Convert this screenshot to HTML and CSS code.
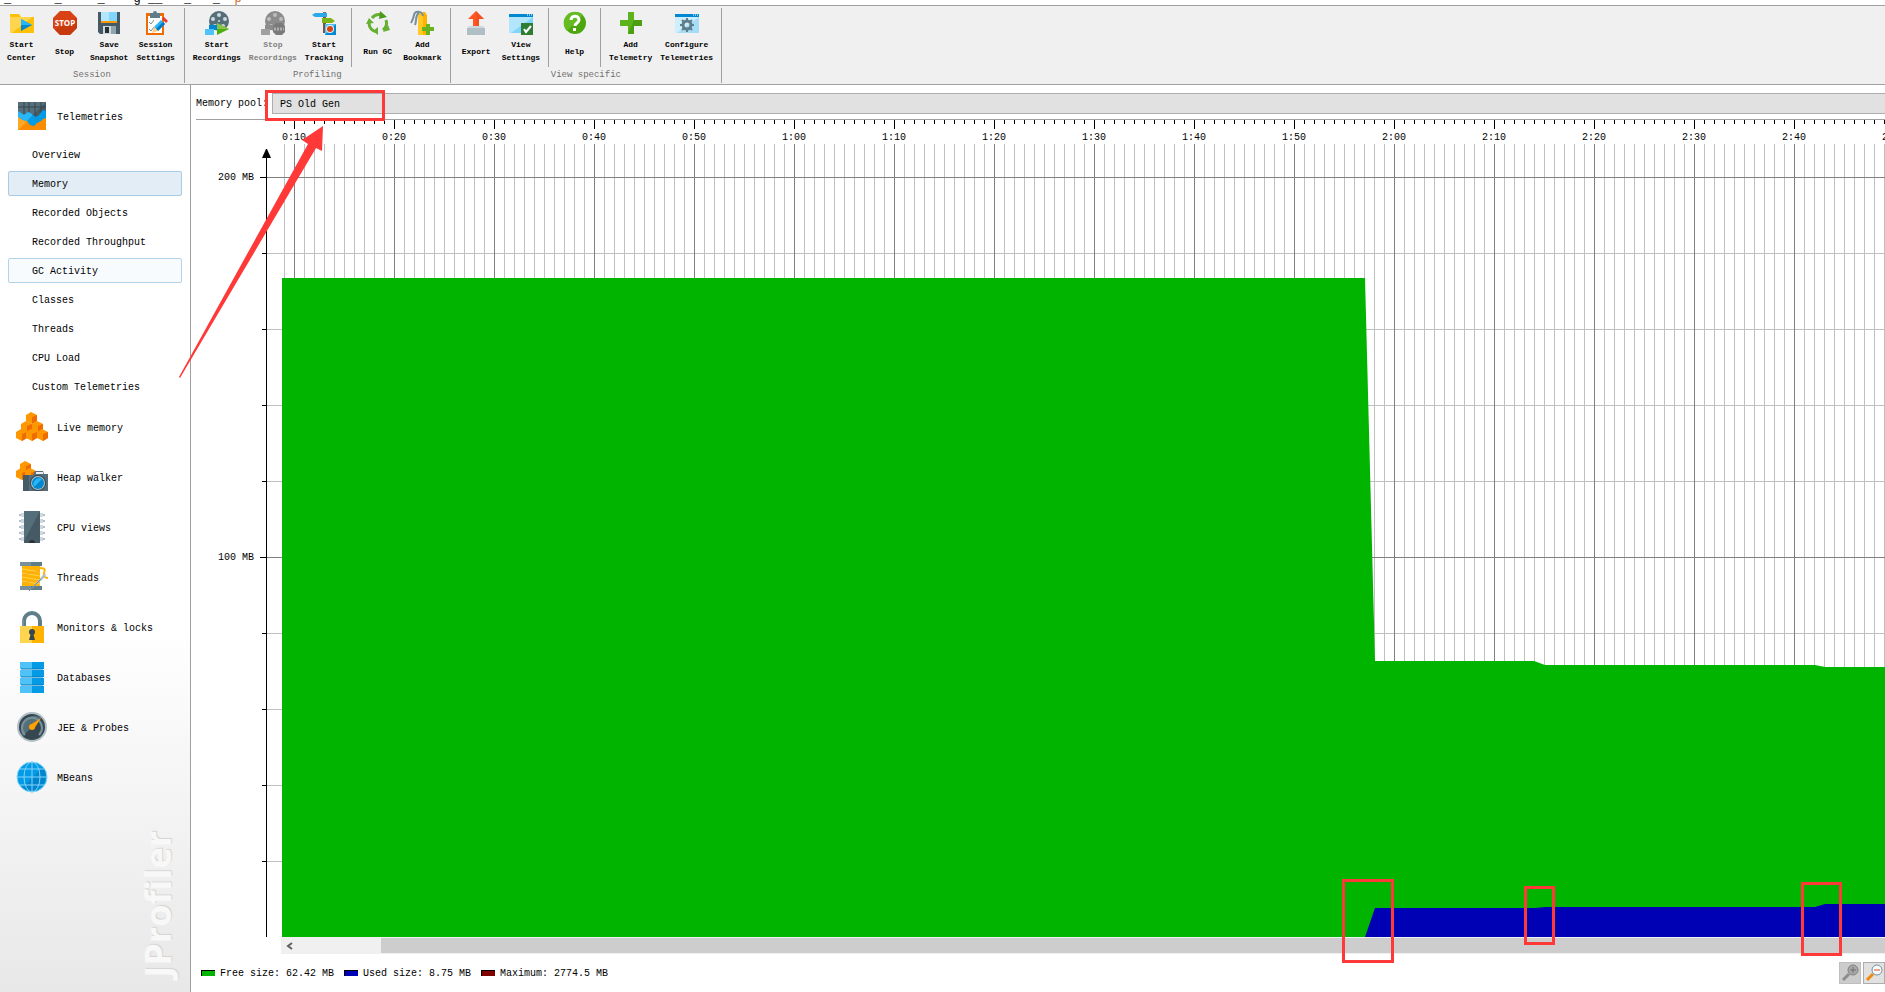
FILE: index.html
```html
<!DOCTYPE html>
<html lang="en">
<head>
    <meta charset="UTF-8">
    <meta name="viewport" content="width=device-width, initial-scale=1.0">
    <title>JProfiler</title>
    <link rel="stylesheet" href="styles.css">
</head>
<body>
    <div class="app">
        <div class="strip"><pre>_      _     _    g __   _   _  <span>p</span></pre></div>

        <header class="toolbar">
            <section class="group">
                <div class="tools">
                    <div class="set">
                        <button type="button" class="tool">
                            <svg viewBox="0 0 24 24"><path fill="#ffc107" d="M0 3h9l2 3h13v16H0z"/><path fill="#ffd54f" d="M0 6h22L2 22H0z"/><path fill="#0288d1" d="M11 8l11 6-11 6z"/><path fill="#29b6f6" d="M11 8l11 6H11z"/></svg>
                            <span>Start<br>Center</span>
                        </button>
                        <button type="button" class="tool">
                            <svg viewBox="0 0 24 24"><path fill="#d84315" d="M7 0h10l7 7v10l-7 7H7l-7-7V7z"/><path fill="#bf360c" d="M24 7v10l-7 7H7l-5-5z" opacity=".7"/><text class="stop" x="12" y="15">STOP</text></svg>
                            <span>Stop</span>
                        </button>
                        <button type="button" class="tool">
                            <svg viewBox="0 0 24 24"><path fill="#455a64" d="M1 1h22v22H3l-2-2z"/><path fill="#b3e5fc" d="M4 1h16v9H4z"/><path fill="#81d4fa" d="M12 1h8v9h-8z"/><path fill="#ff9800" d="M4 10h16v2H4z"/><path fill="#cfd8dc" d="M6 15h13v8H6z"/><path fill="#263238" d="M8 16h4v6H8z"/><path fill="#90a4ae" d="M14 15h5v8h-5z"/></svg>
                            <span>Save<br>Snapshot</span>
                        </button>
                        <button type="button" class="tool">
                            <svg viewBox="0 0 24 24"><path fill="#ef6c00" d="M2 2h18v22H2z"/><path fill="#fff" d="M4 5h14v17H4z"/><path fill="#607d8b" d="M6 2h3a2 2 0 014 0h3v5H6z"/><path fill="none" stroke="#78909c" d="M5 11l2 2 3-4M5 18l2 2 3-4"/><path fill="#e53935" d="M18 8l2-2 4 4-2 2z"/><path fill="#29b6f6" d="M17 9l4 4-7 7-4-4z"/><path fill="#0277bd" d="M19 11l2 2-7 7-2-2z"/><path fill="#ffcc80" d="M10 16l4 4-6 2z"/></svg>
                            <span>Session<br>Settings</span>
                        </button>
                    </div>
                </div>
                <h2>Session</h2>
            </section>

            <section class="group">
                <div class="tools">
                    <div class="set">
                        <button type="button" class="tool">
                            <svg viewBox="0 0 24 24"><circle cx="14" cy="10" r="10" fill="#546e7a"/><g fill="#cfd8dc"><circle cx="14" cy="4" r="2"/><circle cx="8" cy="8" r="2"/><circle cx="20" cy="8" r="2"/><circle cx="10" cy="15" r="2"/><circle cx="18" cy="15" r="2"/><circle cx="14" cy="10" r="1"/></g><path fill="#0288d1" d="M4 14h8v5H9v5H0v-6h4z"/><path fill="#4fc3f7" d="M0 18h9v6H0z"/><path fill="#4caf10" d="M12 12l12 6-12 6z"/><path fill="#8bc34a" d="M12 12l12 6H12z"/></svg>
                            <span>Start<br>Recordings</span>
                        </button>
                        <button type="button" class="tool" disabled>
                            <svg viewBox="0 0 24 24"><circle cx="14" cy="10" r="10" fill="#8c8c8c"/><g fill="#bdbdbd"><circle cx="14" cy="4" r="2"/><circle cx="8" cy="8" r="2"/><circle cx="20" cy="8" r="2"/><circle cx="10" cy="15" r="2"/></g><path fill="#8c8c8c" d="M4 14h8v5H9v5H0v-6h4z"/><path fill="#a0a0a0" d="M0 18h9v6H0z"/><path fill="#7a7a7a" d="M15 12h6l3 3v6l-3 3h-6l-3-3v-6z"/><path stroke="#b0b0b0" stroke-width="3" stroke-dasharray="2 1" d="M13 18h10"/></svg>
                            <span>Stop<br>Recordings</span>
                        </button>
                        <button type="button" class="tool">
                            <svg viewBox="0 0 24 24"><path fill="#795548" d="M11 2h3v20h-3z"/><path fill="#8d6e63" d="M11 1h3v2h-3z"/><path fill="#29a9e8" d="M3 2h12v4H3L0 4z"/><path fill="#7cb518" d="M10 7h9l4 3-3 2H10z"/><path fill="#0288d1" d="M13 13h11v11H13z"/><path fill="#4fc3f7" d="M13 13h11L13 24z"/><circle cx="18" cy="18" r="4" fill="#eceff1"/><circle cx="18" cy="18" r="3" fill="#d84315"/></svg>
                            <span>Start<br>Tracking</span>
                        </button>
                    </div>
                    <div class="set">
                        <button type="button" class="tool">
                            <svg viewBox="0 0 24 24"><g fill="none" stroke="#66b032" stroke-width="3"><path d="M6 7a9 9 0 0110-3"/><path d="M20 9a9 9 0 01-3 10"/><path d="M11 21a9 9 0 01-8-9"/></g><path fill="#4c9a1c" d="M14 0l7 6-8 2z"/><path fill="#66b032" d="M12 16v8l-5-4zM22 14l2 5-7 2zM0 13l3-6 5 5z"/></svg>
                            <span>Run GC</span>
                        </button>
                        <button type="button" class="tool">
                            <svg viewBox="0 0 24 24"><path fill="#ffb300" d="M8 4l3-3h4l2 3v20H8z"/><path fill="#ffca28" d="M8 4l3-3h2v23H8z"/><path fill="none" stroke="#78909c" stroke-width="2" d="M13 5C12 0 5-1 4 4S2 10 1 12M9 2C5 4 7 9 5 14"/><path fill="#66b220" d="M16 13h4v3h4v4h-4v4h-4v-4h-4v-4h4z"/></svg>
                            <span>Add<br>Bookmark</span>
                        </button>
                    </div>
                </div>
                <h2>Profiling</h2>
            </section>

            <section class="group">
                <div class="tools">
                    <div class="set">
                        <button type="button" class="tool">
                            <svg viewBox="0 0 24 24"><path fill="#ff5722" d="M12 0l8 8h-5v7H9V8H4z"/><path fill="#e64a19" d="M12 0l8 8h-5v7h-3z" opacity=".5"/><path fill="#cfd8dc" d="M5 15h14l2 2H3z"/><path fill="#b0bec5" d="M3 17h18v7H3z"/></svg>
                            <span>Export</span>
                        </button>
                        <button type="button" class="tool">
                            <svg viewBox="0 0 24 24"><path fill="#0288d1" d="M0 3h24v3H0z"/><path fill="#b3e5fc" d="M0 6h24v16H0z"/><path fill="#81d4fa" d="M24 6v16H2z"/><path stroke="#fff" d="M18 4h1M20 4h1M22 4h1"/><path fill="#2e7d32" d="M12 12h12v12H12z"/><path fill="none" stroke="#fff" stroke-width="2" d="M15 18l2 3 5-6"/></svg>
                            <span>View<br>Settings</span>
                        </button>
                    </div>
                    <div class="set">
                        <button type="button" class="tool">
                            <svg viewBox="0 0 24 24"><circle cx="12" cy="12" r="11" fill="#4da60d"/><path fill="#64bb22" d="M4 20A11 11 0 0120 4z"/><path fill="none" stroke="#fff" stroke-width="3" d="M8 9c0-5 8-5 8 0 0 3-4 3-4 6"/><path fill="#fff" d="M10 17h3v3h-3z"/></svg>
                            <span>Help</span>
                        </button>
                    </div>
                    <div class="set">
                        <button type="button" class="tool">
                            <svg viewBox="0 0 24 24"><path fill="#5cb31c" d="M9 1h6v8h8v6h-8v8H9v-8H1V9h8z"/><path fill="#4c9f10" d="M15 9h8v6h-8v8H9z"/></svg>
                            <span>Add<br>Telemetry</span>
                        </button>
                        <button type="button" class="tool">
                            <svg viewBox="0 0 24 24"><path fill="#0288d1" d="M0 3h24v3H0z"/><path fill="#cdeefd" d="M0 6h24v16H0z"/><path fill="#a5ddf8" d="M24 6v16H2z"/><path stroke="#fff" d="M18 4h1M20 4h1M22 4h1"/><circle cx="12" cy="14" r="4" fill="none" stroke="#607d8b" stroke-width="3"/><path stroke="#607d8b" stroke-width="2" d="M12 7v3M12 18v3M5 14h3M16 14h3M7 9l2 2M15 17l2 2M17 9l-2 2M9 17l-2 2"/></svg>
                            <span>Configure<br>Telemetries</span>
                        </button>
                    </div>
                </div>
                <h2>View specific</h2>
            </section>
        </header>

        <div class="content">
            <nav class="sidebar">
                <a href="#" class="item">
                    <svg viewBox="0 0 32 32"><path fill="#455a64" d="M2 2h28v28H2z"/><path fill="#607d8b" d="M2 2h28L12 20H2z" opacity=".6"/><path stroke="#37474f" d="M2 7h28M8 2v12M13 2v10M19 2v14M25 2v12"/><path fill="#039be5" d="M2 11l3 2 3 2 4-3 4 2 4 3 3-2 3-4 2-1 2 1v19H2z"/><path fill="#29b6f6" d="M2 11l6 4 4-3 4 2v2L8 24H2z"/><path fill="#fb8c00" d="M2 17l4 3 5 1 3 4 4 1 3-3 4-2 2-2 3-1v12H2z"/><path fill="#ffa726" d="M2 17l4 3 5 2-9 8z"/></svg>
                    <span>Telemetries</span>
                </a>
                <ul class="sub">
                    <li><a href="#">Overview</a></li>
                    <li><a href="#" class="selected">Memory</a></li>
                    <li><a href="#">Recorded Objects</a></li>
                    <li><a href="#">Recorded Throughput</a></li>
                    <li><a href="#" class="hovered">GC Activity</a></li>
                    <li><a href="#">Classes</a></li>
                    <li><a href="#">Threads</a></li>
                    <li><a href="#">CPU Load</a></li>
                    <li><a href="#">Custom Telemetries</a></li>
                </ul>
                <a href="#" class="item">
                    <svg viewBox="0 0 32 32"><defs><g id="cube"><path fill="#ff9800" d="M0 3l5-3 6 3v6l-5 3-6-3z"/><path fill="#ef6c00" d="M6 5l5-2v6l-5 3z"/></g></defs><use href="#cube" x="10" y="1"/><use href="#cube" x="5" y="10"/><use href="#cube" x="16" y="10"/><use href="#cube" x="0" y="18"/><use href="#cube" x="10" y="18"/><use href="#cube" x="21" y="18"/></svg>
                    <span>Live memory</span>
                </a>
                <a href="#" class="item">
                    <svg viewBox="0 0 32 32"><use href="#cube" x="4" y="0"/><use href="#cube" x="0" y="7"/><use href="#cube" x="9" y="7"/><path fill="#546e7a" d="M7 14h10l2-4h8l1 3h4v17H7z"/><path fill="#37474f" d="M7 14h6v16H7z" opacity=".5"/><path fill="#eceff1" d="M20 11h7v2h-7z"/><circle cx="22" cy="22" r="8" fill="#37474f"/><circle cx="22" cy="22" r="7" fill="#b0bec5"/><circle cx="22" cy="22" r="6" fill="#0288d1"/><path fill="#29b6f6" d="M18 26a6 6 0 018-8z"/></svg>
                    <span>Heap walker</span>
                </a>
                <a href="#" class="item">
                    <svg viewBox="0 0 32 32"><path stroke="#b0bec5" stroke-width="2" d="M3 4h26M3 10h26M3 16h26M3 22h26M3 28h26"/><path stroke="#cfd8dc" stroke-width="4" d="M5 4h22M5 10h22M5 16h22M5 22h22M5 28h22"/><path fill="#455a64" d="M8 0h16v32H8z"/><path fill="#546e7a" d="M8 0h16L8 30z"/><path fill="#263238" d="M13 32a3 3 0 016 0z"/></svg>
                    <span>CPU views</span>
                </a>
                <a href="#" class="item">
                    <svg viewBox="0 0 32 32"><path fill="#ffb300" d="M6 5h18v21H6z"/><path stroke="#ffd54f" d="M6 8l18 3M6 12l18 3M6 16l18 3M6 20l18 3"/><path stroke="#f9a825" d="M6 22l18-3M6 14l18-4"/><path fill="#607d8b" d="M4 1h22v4H4zM4 25h22v4H4z"/><path fill="#78909c" d="M4 1h11v4H4zM4 25h11v4H4z"/><path fill="none" stroke="#ffb300" stroke-width="2" d="M24 7c6 0 5 2 4 5s1 5 4 5"/><path fill="#b0bec5" d="M12 31l15-17 3-1-1 3z"/><path stroke="#78909c" d="M13 30l12-12"/></svg>
                    <span>Threads</span>
                </a>
                <a href="#" class="item">
                    <svg viewBox="0 0 32 32"><path fill="none" stroke="#607d8b" stroke-width="4" d="M8 16v-6a8 8 0 0116 0v6"/><path stroke="#90a4ae" d="M7 15V9"/><path fill="#ffb300" d="M4 15h24v17H4z"/><path fill="#ffd54f" d="M4 15h12v17H4z"/><circle cx="16" cy="21" r="3" fill="#37474f"/><path fill="#37474f" d="M15 22h2l2 7h-6z"/></svg>
                    <span>Monitors &amp; locks</span>
                </a>
                <a href="#" class="item">
                    <svg viewBox="0 0 32 32"><path fill="#039be5" d="M4 1h24v7H4zM4 9h24v7H4zM4 17h24v7H4zM4 25h24v7H4z"/><path fill="#4fc3f7" d="M4 1h12v7H4zM4 9h12v7H4zM4 17h12v7H4zM4 25h12v7H4z"/><path stroke="#0277bd" d="M5 8h22M5 16h22M5 24h22"/></svg>
                    <span>Databases</span>
                </a>
                <a href="#" class="item">
                    <svg viewBox="0 0 32 32"><circle cx="16" cy="16" r="15" fill="#b0bec5"/><circle cx="16" cy="16" r="13" fill="#37474f"/><path fill="#546e7a" d="M7 25A13 13 0 0125 7z"/><path fill="none" stroke="#78909c" stroke-width="2" d="M9 24a10 10 0 1114 0"/><circle cx="16" cy="16" r="3" fill="#ffa000"/><path fill="#ffa000" d="M14 14L25 7l-7 11z"/></svg>
                    <span>JEE &amp; Probes</span>
                </a>
                <a href="#" class="item">
                    <svg viewBox="0 0 32 32"><circle cx="16" cy="16" r="15" fill="#039be5"/><path fill="#0277bd" d="M27 6A15 15 0 016 27z" opacity=".6"/><g fill="none" stroke="#81d4fa"><circle cx="16" cy="16" r="15"/><ellipse cx="16" cy="16" rx="8" ry="15"/><path d="M16 1v30M1 16h30M4 8h24M4 24h24"/></g></svg>
                    <span>MBeans</span>
                </a>
                <div class="brand">JProfiler</div>
            </nav>

            <main class="main">
                <div class="pool">
                    <label for="pool">Memory pool:</label>
                    <select id="pool">
                        <option>PS Old Gen</option>
                    </select>
                </div>

                <svg class="chart">
                    <defs>
                        <pattern id="seconds" x="93" y="0" width="10" height="10" patternUnits="userSpaceOnUse"><rect width="1" height="10" fill="#c0c0c0"/></pattern>
                        <pattern id="tens" x="103" y="0" width="100" height="10" patternUnits="userSpaceOnUse"><rect width="1" height="10" fill="#808080"/></pattern>
                    </defs>
                    <path stroke="#000" stroke-width="4" stroke-dasharray="1 9" d="M93 2H4000"/>
                    <path stroke="#000" stroke-width="8" stroke-dasharray="1 99" d="M103 5H4000"/>

                    <!-- grid -->
                    <rect x="93" y="24" width="100%" height="793" fill="url(#seconds)"/>
                    <g fill="#c0c0c0">
                        <rect x="75" y="133" width="100%" height="1"/>
                        <rect x="75" y="209" width="100%" height="1"/>
                        <rect x="75" y="285" width="100%" height="1"/>
                        <rect x="75" y="361" width="100%" height="1"/>
                        <rect x="75" y="513" width="100%" height="1"/>
                        <rect x="75" y="589" width="100%" height="1"/>
                        <rect x="75" y="665" width="100%" height="1"/>
                        <rect x="75" y="741" width="100%" height="1"/>
                    </g>
                    <rect x="93" y="24" width="100%" height="793" fill="url(#tens)"/>
                    <rect x="75" y="57" width="100%" height="1" fill="#808080"/>
                    <rect x="75" y="437" width="100%" height="1" fill="#808080"/>

                    <!-- time labels -->
                    <g text-anchor="middle">
                        <text x="103" y="20">0:10</text>
                        <text x="203" y="20">0:20</text>
                        <text x="303" y="20">0:30</text>
                        <text x="403" y="20">0:40</text>
                        <text x="503" y="20">0:50</text>
                        <text x="603" y="20">1:00</text>
                        <text x="703" y="20">1:10</text>
                        <text x="803" y="20">1:20</text>
                        <text x="903" y="20">1:30</text>
                        <text x="1003" y="20">1:40</text>
                        <text x="1103" y="20">1:50</text>
                        <text x="1203" y="20">2:00</text>
                        <text x="1303" y="20">2:10</text>
                        <text x="1403" y="20">2:20</text>
                        <text x="1503" y="20">2:30</text>
                        <text x="1603" y="20">2:40</text>
                        <text x="1703" y="20">2:50</text>
                    </g>

                    <!-- free and used size -->
                    <path fill="#00b400" d="M91 158H1174L1184 541H1343L1354 545H1624L1634 547H4000V817H91z"/>
                    <path fill="#0000b4" d="M1174 817L1184 788H1344L1354 787H1624L1634 784H4000V817z"/>

                    <!-- value axis -->
                    <rect x="75" y="34" width="1" height="783"/>
                    <path d="M71 38L75 29h1l4 9z"/>
                    <path d="M69 57h6v1h-6zM69 437h6v1h-6zM71 133h4v1h-4zM71 209h4v1h-4zM71 285h4v1h-4zM71 361h4v1h-4zM71 513h4v1h-4zM71 589h4v1h-4zM71 665h4v1h-4zM71 741h4v1h-4z"/>
                    <g text-anchor="end">
                        <text x="63" y="60">200 MB</text>
                        <text x="63" y="440">100 MB</text>
                    </g>
                </svg>

                <div class="scroll">
                    <button type="button" class="scroll-left" aria-label="Scroll left"><svg viewBox="0 0 8 8"><path fill="none" stroke="#606060" stroke-width="2" d="M6 1L2 4l4 3"/></svg></button>
                    <div class="thumb"></div>
                </div>

                <footer class="footer">
                    <ul class="legend">
                        <li><i class="free"></i>Free size: 62.42 MB</li>
                        <li><i class="used"></i>Used size: 8.75 MB</li>
                        <li><i class="max"></i>Maximum: 2774.5 MB</li>
                    </ul>
                    <div class="zoom">
                        <button type="button" aria-label="Zoom in" disabled><svg viewBox="0 0 18 18"><path stroke="#8c8c8c" stroke-width="3" d="M2 16l6-6"/><circle cx="12" cy="6" r="5" fill="#a8a8a8" stroke="#808080"/><path stroke="#707070" d="M9 6h6M12 3v6"/></svg></button>
                        <button type="button" aria-label="Zoom out"><svg viewBox="0 0 18 18"><path stroke="#ef8a10" stroke-width="3" d="M2 16l6-6"/><circle cx="12" cy="6" r="5" fill="#f5fbff" stroke="#78909c"/><path stroke="#e64a19" d="M9 6h6"/></svg></button>
                    </div>
                </footer>
            </main>
        </div>

        <!-- markers drawn over the page -->
        <svg class="marks">
            <path fill="#ff3838" fill-rule="evenodd" d="M265 90h120v31H265zM268 93v25h114V93zM1342 879h52v84h-52zM1345 882v78h46v-78zM1524 886h31v59h-31zM1527 889v53h25v-53zM1801 882h41v74h-41zM1804 885v68h35v-68z"/>
            <path fill="#ff3838" d="M323 126L302 140l6 4L179 377l1 1L316 148l6 3z"/>
        </svg>
    </div>
</body>
</html>
```

FILE: styles.css
```css
body {
    margin: 0;
    font-family: "Liberation Mono", monospace;
    font-size: 10px;
    line-height: 13px;
    color: #000;
    background-color: #fff;
}
button {
    font-family: inherit;
    border: none;
    background: none;
    padding: 0;
}
a {
    color: inherit;
    text-decoration: none;
}
ul {
    list-style: none;
    margin: 0;
    padding: 0;
}
.app {
    position: relative;
    display: flex;
    flex-direction: column;
    min-height: 100vh;
    overflow: hidden;
}

/* bottom edge of the line above the toolbar */
.strip {
    display: flex;
    align-items: flex-end;
    height: 5px;
    padding: 0 4px;
    overflow: hidden;
}
.strip pre {
    margin: 0;
    font-family: inherit;
    font-size: 12px;
    line-height: 12px;
}
.strip span {
    color: #d2691e;
}

/* toolbar */
.toolbar {
    display: flex;
    height: 78px;
    border-top: 1px solid #a0a0a0;
    border-bottom: 1px solid #a0a0a0;
    background-color: #f0f0f0;
}
.group {
    display: flex;
    flex-direction: column;
    margin: 2px 0 1px;
    border-right: 1px solid #a0a0a0;
}
.tools {
    display: flex;
    height: 59px;
}
.set {
    display: flex;
    padding: 0 4px;
    border-right: 1px solid #a0a0a0;
}
.set:last-child {
    border-right: none;
}
.group:first-child .set {
    padding: 0 5px 0 0;
}
.tool {
    display: flex;
    flex-direction: column;
    align-items: center;
    min-width: 43px;
    padding: 3px 4px 0;
    font-size: 8px;
    line-height: 13px;
    font-weight: bold;
    color: #000;
}
.tool svg {
    width: 24px;
    height: 24px;
    overflow: visible;
}
.tool span {
    display: flex;
    flex-direction: column;
    justify-content: center;
    height: 34px;
    text-align: center;
}
.tool:disabled {
    color: #808080;
}
.stop {
    font: bold 8px "Open Sans", sans-serif;
    fill: #fff;
    text-anchor: middle;
}
.group h2 {
    margin: 2px 0 0;
    font-size: 9px;
    line-height: 13px;
    font-weight: normal;
    text-align: center;
    color: #707070;
}

/* sidebar */
.content {
    display: flex;
    flex: 1;
}
.sidebar {
    display: flex;
    flex-direction: column;
    width: 190px;
    padding-top: 6px;
    box-sizing: border-box;
    background: linear-gradient(#fff 60%, #e8e8e8);
}
.item {
    display: flex;
    align-items: center;
    gap: 9px;
    height: 50px;
    padding-left: 16px;
}
.item svg {
    width: 32px;
    height: 32px;
}
.item span {
    padding-top: 2px;
}
.sub li {
    padding: 1px 8px 3px;
}
.sub a {
    display: block;
    padding: 2px 23px 0;
    border: 1px solid transparent;
    border-radius: 2px;
    line-height: 21px;
}
.sub .selected {
    background-color: #e3edf6;
    border-color: #a9cbe3;
}
.sub .hovered {
    background-color: #f7fbfe;
    border-color: #b2d2e8;
}
.brand {
    align-self: flex-end;
    margin: auto 10px 14px 0;
    font: bold 36px/44px "Open Sans", sans-serif;
    color: #f8f8f8;
    text-shadow: 1px 1px 1px #d4d4d4;
    writing-mode: vertical-rl;
    transform: rotate(180deg);
}

/* telemetry view */
.main {
    display: flex;
    flex-direction: column;
    flex: 1;
    min-width: 0;
    border-left: 1px solid #a0a0a0;
}
.pool {
    display: flex;
    align-items: center;
    gap: 4px;
    height: 31px;
    margin-left: 5px;
    padding-top: 3px;
    border-bottom: 1px solid #a0a0a0;
}
.pool select {
    flex: 1;
    height: 21px;
    margin-right: -1px;
    padding: 1px 7px 0;
    appearance: none;
    border: 1px solid #adadad;
    border-radius: 0;
    background-color: #e1e1e1;
    font-family: inherit;
    font-size: 10px;
    color: #000;
}
.chart {
    display: block;
    width: 100%;
    height: 817px;
}
.scroll {
    display: flex;
    height: 16px;
    margin-left: 90px;
    border-top: 1px solid #f0f0f0;
    background-color: #f0f0f0;
}
.scroll-left {
    width: 100px;
    padding-left: 5px;
    text-align: left;
}
.scroll-left svg {
    display: block;
    width: 8px;
    height: 8px;
}
.thumb {
    flex: 1;
    height: 15px;
    background-color: #cdcdcd;
}
.footer {
    display: flex;
    flex: 1;
    align-items: center;
    justify-content: space-between;
    padding-left: 10px;
}
.legend {
    display: flex;
    gap: 10px;
}
.legend li {
    display: flex;
    align-items: center;
    gap: 5px;
}
.legend i {
    width: 13px;
    height: 5px;
    border-top: 1px solid #000;
    border-left: 1px solid #000;
}
.free {
    background-color: #00b400;
}
.used {
    background-color: #0000b4;
}
.max {
    background-color: #800000;
}
.zoom {
    display: flex;
    gap: 2px;
}
.zoom button {
    width: 22px;
    height: 22px;
    border: 1px solid #adadad;
    background-color: #e1e1e1;
}
.zoom button:disabled {
    border-color: #bfbfbf;
    background-color: #ccc;
}
.zoom svg {
    display: block;
    width: 18px;
    height: 18px;
    margin: auto;
}
.marks {
    position: absolute;
    top: 0;
    left: 0;
    width: 100%;
    height: 100%;
    pointer-events: none;
}
```
